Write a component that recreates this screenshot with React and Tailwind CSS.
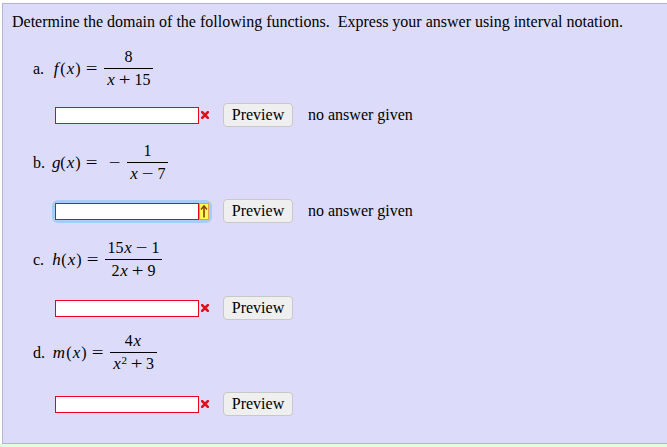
import React from "react";

const serif = { fontFamily: '"Liberation Serif", "Times New Roman", serif' };

// math variable: italic letter in a fixed-width box, like MathJax's math italic
function V({ children, w = "w-[9px]" }) {
  return (
    <span className={`inline-block ${w} text-center italic text-[17px] font-['Liberation_Serif',serif]`}>
      {children}
    </span>
  );
}

function P({ children }) {
  return <span className="inline-block w-[6px] text-center">{children}</span>;
}

// operator (+ − =) drawn a bit wider, as TeX does
function Op({ children, m = "mx-[3.5px]" }) {
  return (
    <span className={`inline-block w-[12px] text-center ${m}`}>
      <span className="inline-block scale-x-[1.3]">{children}</span>
    </span>
  );
}

function Frac({ num, den }) {
  return (
    <span className="inline-flex flex-col items-stretch text-center mx-[2px] font-['Liberation_Serif',serif]">
      <span className="h-[16px] leading-[16px] pb-[3px] box-content px-[2.5px] whitespace-nowrap">{num}</span>
      <span className="h-px bg-black" />
      <span className="h-[16px] leading-[16px] pt-[3px] box-content px-[2.5px] whitespace-nowrap">{den}</span>
    </span>
  );
}

function FuncRow({ label, fn, fw, neg = false, num, den, mt }) {
  return (
    <div className={`flex items-center pl-[30px] ${mt}`}>
      <span className="w-[19px] leading-[16px]">{label}</span>
      <span className="leading-[16px] whitespace-nowrap">
        <V w={fw}>{fn}</V>
        <P>(</P>
        <V>x</V>
        <P>)</P>
      </span>
      <span className="leading-[16px]">
        <Op m="mx-[4.5px]">=</Op>
      </span>
      {neg && (
        <span className="leading-[16px]">
          <Op m="ml-[7px] mr-[4px]">−</Op>
        </span>
      )}
      <Frac num={num} den={den} />
    </div>
  );
}

function RedX() {
  return (
    <svg width="8" height="8" viewBox="0 0 8 8" className="ml-[2px]">
      <path d="M1.2 1.2 L6.8 6.8 M6.8 1.2 L1.2 6.8" stroke="#e0101a" strokeWidth="2.6" strokeLinecap="square" />
    </svg>
  );
}

function UpArrow() {
  return (
    <span className="w-[10px] h-[17px] bg-[#ffff55] border border-[#e8a040] flex items-center justify-center">
      <svg width="8" height="13" viewBox="0 0 8 13">
        <path d="M4 1 L4 12.5" stroke="#8b3a0a" strokeWidth="1.6" />
        <path d="M1 4.5 L4 0.8 L7 4.5" stroke="#8b3a0a" strokeWidth="1.4" fill="none" />
      </svg>
    </span>
  );
}

function AnswerRow({ mt, focused = false, msg }) {
  return (
    <div className={`flex items-center h-[24px] pl-[52px] ${mt}`}>
      <div className={`flex items-center ${focused ? "rounded-[3px] shadow-[0_0_0_3px_#a7cdf6]" : ""}`}>
        <input
          type="text"
          className="w-[144px] h-[17px] bg-white border border-[#e8001c] outline-none"
          readOnly
        />
        {focused && <UpArrow />}
      </div>
      {!focused && <RedX />}
      <button
        className="ml-[14px] w-[70px] h-[24px] bg-[#efefef] border border-[#c8c8c8] rounded-[4px] text-[16px] leading-none text-black"
        style={serif}
      >
        Preview
      </button>
      {msg && <span className="ml-[15px] text-[16px]">{msg}</span>}
    </div>
  );
}

export default function App() {
  return (
    <div className="w-[667px] h-[447px] bg-white overflow-hidden text-black text-[16px]" style={serif}>
      <div className="mt-[3px] ml-[2px] bg-[#dcdcfa] border-t border-l border-b border-[#b4b4d4] h-[441px]">
        <div className="pl-[9px] pt-[8px] leading-[20px]">
          Determine the domain of the following functions.{"\u00a0 "}Express your answer using interval notation.
        </div>

        <FuncRow
          mt="mt-[17px]"
          label="a."
          fn="f"
          fw="w-[8px]"
          num="8"
          den={
            <>
              <V>x</V>
              <Op>+</Op>15
            </>
          }
        />
        <AnswerRow mt="mt-[15px]" msg="no answer given" />

        <FuncRow
          mt="mt-[16px]"
          label="b."
          fn="g"
          fw="w-[8px]"
          neg
          num="1"
          den={
            <>
              <V>x</V>
              <Op>−</Op>7
            </>
          }
        />
        <AnswerRow mt="mt-[17px]" focused msg="no answer given" />

        <FuncRow
          mt="mt-[17px]"
          label="c."
          fn="h"
          fw="w-[9px]"
          num={
            <>
              15<V>x</V>
              <Op>−</Op>1
            </>
          }
          den={
            <>
              2<V>x</V>
              <Op>+</Op>9
            </>
          }
        />
        <AnswerRow mt="mt-[17px]" />

        <FuncRow
          mt="mt-[13px]"
          label="d."
          fn="m"
          fw="w-[14px]"
          num={
            <>
              4<V>x</V>
            </>
          }
          den={
            <>
              <V>x</V>
              <sup className="text-[11px]">2</sup>
              <Op>+</Op>3
            </>
          }
        />
        <AnswerRow mt="mt-[20px]" />
      </div>
      <div className="h-[3px] bg-[#e2fce2]" />
    </div>
  );
}
